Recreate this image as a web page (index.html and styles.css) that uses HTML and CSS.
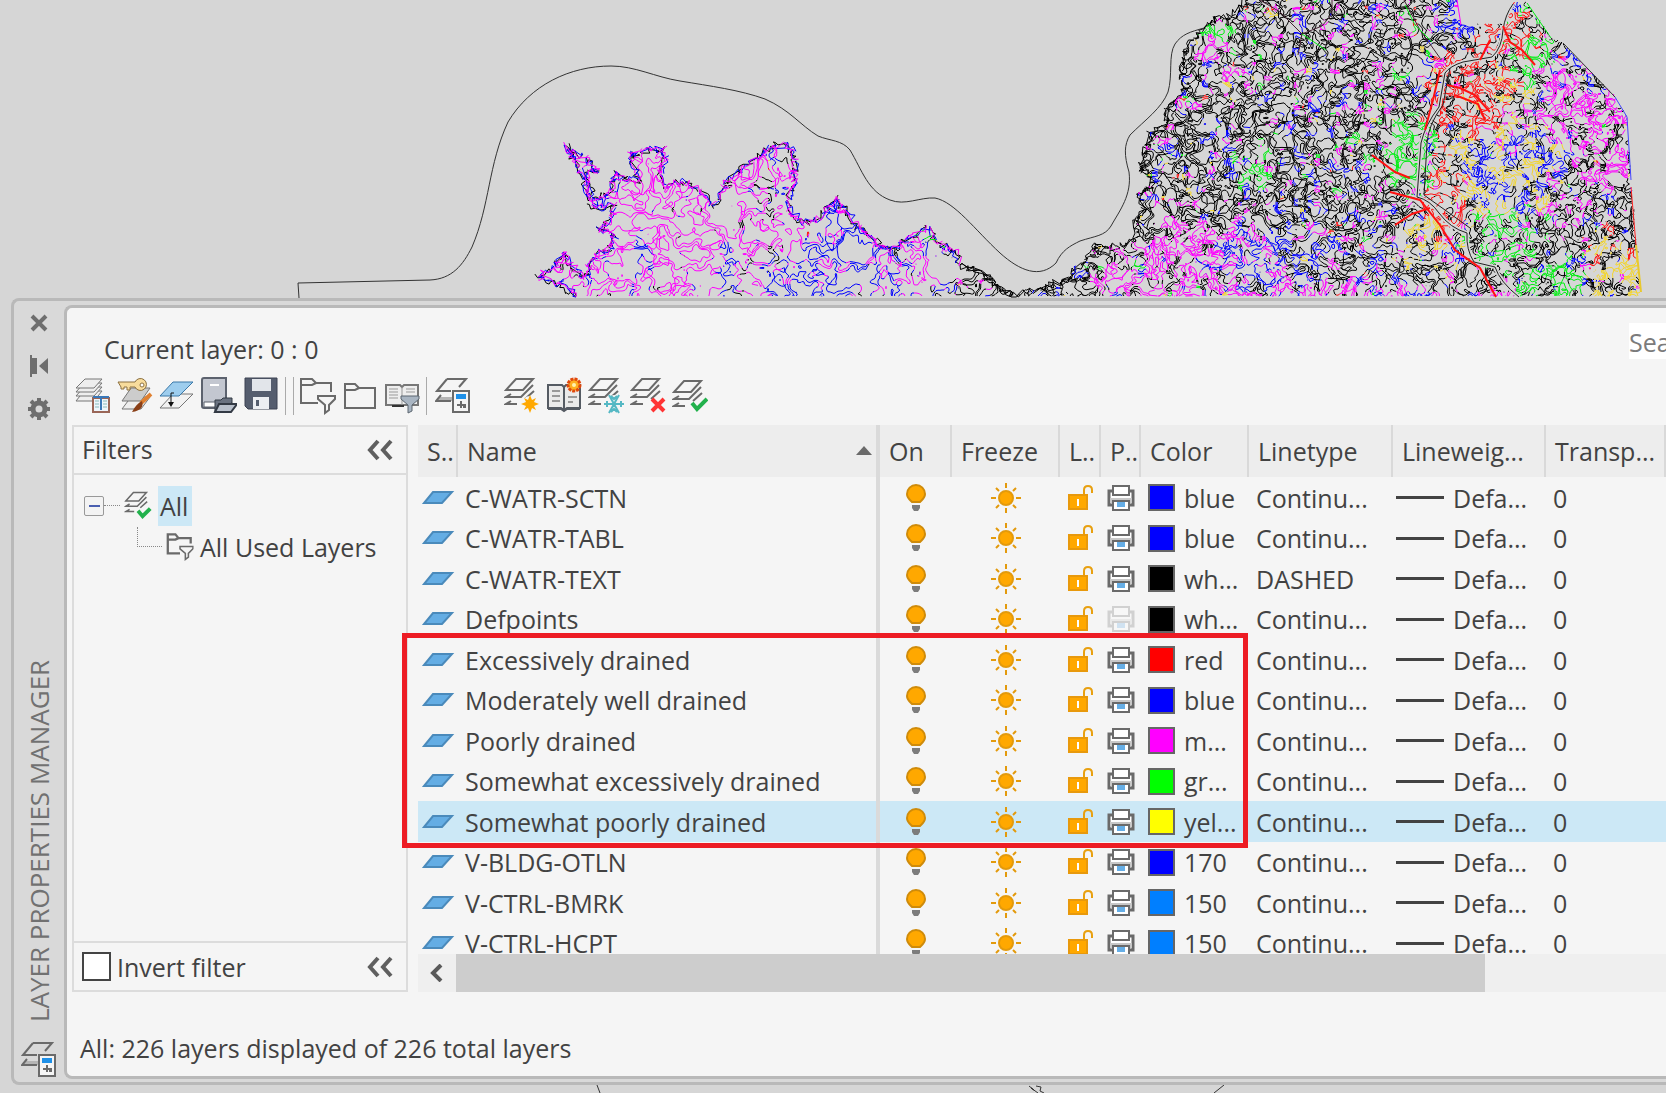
FILE: index.html
```html
<!DOCTYPE html>
<html lang="en">
<head>
<meta charset="utf-8">
<title>Layer Properties Manager</title>
<link rel="stylesheet" href="styles.css">
</head>
<body>
<svg class="sprite" aria-hidden="true">
  <symbol id="layers" viewBox="0 0 36 38">
    <g fill="none" stroke="#6a6a6a" stroke-width="2">
      <path d="M12 2H29L19 13H2Z"/>
      <path d="M7 17L2 20H17L29 8M7 24L2 27H13M21 22L30 14"/>
    </g>
  </symbol>
  <symbol id="layerbox" viewBox="0 0 36 38">
    <path d="M5 20L1 24H17V20Z" fill="#b5b5b5"/>
    <path d="M12 2H31L24 10M12 2L2 14H16M6 18L1 24H16" fill="none" stroke="#6a6a6a" stroke-width="2"/>
    <path d="M18 14H34V35H18Z" fill="#f5f5f5" stroke="#6a6a6a" stroke-width="2"/>
    <path d="M21 17H31V22H21Z" fill="#1e90e8"/>
    <path d="M22 28H31M26 24V31M28 30H31" stroke="#6a6a6a" stroke-width="2"/>
  </symbol>
  <symbol id="funnel" viewBox="0 0 36 38">
    <path d="M18 19H35V22L29 28V33L25 36V28L18 22Z" fill="#f5f5f5" stroke="#6a6a6a" stroke-width="2"/>
  </symbol>
  <symbol id="chevrons" viewBox="0 0 28 22">
    <path d="M12 2L4 11L12 20M25 2L17 11L25 20" fill="none" stroke="#5f5f5f" stroke-width="4"/>
  </symbol>
  <symbol id="plane" viewBox="0 0 34 16">
    <path d="M12 2H31L21 13H3Z" fill="#64ade4" stroke="#4a8abb" stroke-width="2"/>
  </symbol>
  <symbol id="bulb" viewBox="0 0 28 30">
    <path d="M10 19C8 17 5 15 5 11A9 9 0 0 1 23 11C23 15 20 17 18 19Z" fill="#ffa800" stroke="#cf8b0a" stroke-width="2"/>
    <path d="M10 22H18V25L16 28H12L10 25Z" fill="#7c7c7c"/>
  </symbol>
  <symbol id="sun" viewBox="0 0 30 30">
    <circle cx="15" cy="15" r="7" fill="#ffa800" stroke="#e39a0c" stroke-width="2"/>
    <path d="M15 0V5M15 25V30M0 15H5M25 15H30M5 5L8 8M22 22L25 25M5 25L8 22M22 8L25 5" stroke="#e39a0c" stroke-width="2"/>
  </symbol>
  <symbol id="lock" viewBox="0 0 28 28">
    <path d="M17 11V6Q17 2 21 2Q25 2 25 6V9" fill="none" stroke="#e8a010" stroke-width="2"/>
    <path d="M2 11H20V25H2Z" fill="#ffa800" stroke="#e8990c" stroke-width="2"/>
    <path d="M11 15V22" stroke="#fff" stroke-width="2"/>
  </symbol>
  <symbol id="printer" viewBox="0 0 28 28">
    <path d="M2 7H26V21H2Z" fill="#fff" stroke="#6a6a6a" stroke-width="3"/>
    <path d="M3 14H25V19H3Z" fill="#c8c8c8"/>
    <path d="M6 2H22V11H6Z" fill="#fff" stroke="#6a6a6a" stroke-width="2"/>
    <path d="M6 17H22V26H6Z" fill="#fff" stroke="#6a6a6a" stroke-width="2"/>
    <path d="M10 18H18V23H10Z" fill="#66aee6"/>
  </symbol>
</svg>

<main class="workspace">
  <svg class="drawing" id="drawing" viewBox="0 0 1666 1093" preserveAspectRatio="xMinYMin slice" role="img" aria-label="Soil drainage map"></svg>

  <section class="palette">
    <aside class="titlebar">
      <button class="bare" aria-label="Close"><svg width="20" height="20" viewBox="0 0 20 20"><path d="M3 3L17 17M17 3L3 17" stroke="#6e6e6e" stroke-width="4"/></svg></button>
      <button class="bare" aria-label="Auto-hide"><svg width="20" height="24" viewBox="0 0 20 24"><path d="M1 1H3V23H1ZM3 4H8V20H3ZM19 4V20L10 12Z" fill="#6e6e6e"/></svg></button>
      <button class="bare" aria-label="Properties"><svg width="24" height="24" viewBox="0 0 24 24"><g stroke="#6e6e6e" fill="none"><circle cx="12" cy="12" r="6" stroke-width="5"/><path d="M12 1V5M12 19V23M1 12H5M19 12H23M4 4L7 7M17 17L20 20M4 20L7 17M17 7L20 4" stroke-width="4"/></g></svg></button>
      <h1 class="title">LAYER PROPERTIES MANAGER</h1>
      <svg width="36" height="38"><use href="#layerbox"/></svg>
    </aside>

    <div class="panel">
      <header class="head">
        <p class="current">Current layer: 0 : 0</p>
        <input class="search" type="text" placeholder="Search for layer" aria-label="Search for layer">
      </header>

      <div class="toolbar">
        <button class="tool" aria-label="Layer states"><svg viewBox="0 0 36 38"><g fill="#eee" stroke="#777" stroke-width="1"><path d="M9 14H27L19 24H1Z"/><path d="M9 10H27L19 19H1Z"/><path d="M9 6H27L19 15H1Z"/><path d="M10 2H27L19 11H1Z"/></g><path d="M18 21H34V35H18Z" fill="#eef5fb" stroke="#9a6657" stroke-width="2"/><path d="M18 20H34M26 21V33" stroke="#3a78b8" stroke-width="2"/><path d="M20 24H24M20 27H24M20 30H24M28 24H32M28 27H32M28 30H32" stroke="#8bb"/></svg></button>
        <button class="tool" aria-label="Layer match"><svg viewBox="0 0 36 38"><g stroke="#777"><path d="M14 20H33L24 32H5Z" fill="#eee"/><path d="M14 11H33L24 24H5Z" fill="#ccc"/></g><path d="M1 5H18A6 6 0 1 1 18 10H13V13H10V10H7V12H4V10Z" fill="#f8dc9c" stroke="#8c7040"/><circle cx="25" cy="8" r="2" fill="#fff" stroke="#8c7040"/><path d="M34 17L24 26" stroke="#e08030" stroke-width="4"/><path d="M25 24Q28 33 15 35Q19 27 25 24Z" fill="#8a4018"/></svg></button>
        <button class="tool" aria-label="Change to current layer"><svg viewBox="0 0 36 38"><path d="M14 17H34L20 31H1Z" fill="#f2f2f2" stroke="#777"/><path d="M14 5H34L20 19H1Z" fill="#9dcdee" stroke="#3a78a8"/><path d="M15 16H12V27" fill="none" stroke="#111" stroke-width="1"/><path d="M9 25H15L12 30Z" fill="#111"/></svg></button>
        <button class="tool" aria-label="Open layer state"><svg viewBox="0 0 36 38"><path d="M1 3Q1 1 3 1H25V31H3Q1 31 1 29Z" fill="#c3c7d0" stroke="#5c626e" stroke-width="2"/><path d="M3 25H15V30H3Z" fill="#fff" stroke="#5c626e"/><path d="M9 8H18" stroke="#fff" stroke-width="2"/><path d="M14 23H20L22 21H31V26H30V35H14Z" fill="#6a7280" stroke="#333a44"/><path d="M18 27H36L30 35H14Z" fill="#b9c0cb" stroke="#333a44" stroke-width="2"/></svg></button>
        <button class="tool" aria-label="Save layer state"><svg viewBox="0 0 36 38"><path d="M2 1H34V32H5L2 29Z" fill="#555d6e" stroke="#3d4352"/><path d="M9 2H28V14H9Z" fill="#e2e5ea"/><path d="M10 20H26V32H10Z" fill="#eceef2"/><path d="M13 23H16V29H13Z" fill="#555d6e"/></svg></button>
        <span class="divider double"></span>
        <button class="tool" aria-label="New property filter"><svg viewBox="0 0 36 38"><path d="M18 26H1V2H12L16 6H31V15M1 8H12L16 6" fill="none" stroke="#6a6a6a" stroke-width="2"/><use href="#funnel"/></svg></button>
        <button class="tool" aria-label="New group filter"><svg viewBox="0 0 36 38"><path d="M3 31V7H13L17 11H33V31ZM3 13H13L17 11" fill="none" stroke="#6a6a6a" stroke-width="2"/></svg></button>
        <button class="tool" aria-label="Layer filter book"><svg viewBox="0 0 36 38"><path d="M2 8H16L18 10L20 8H34V28H2Z" fill="#eee" stroke="#777" stroke-width="2"/><path d="M18 10V28M5 12H14M5 15H14M5 18H14M5 21H14M22 12H31M22 15H31" stroke="#999"/><path d="M8 29H20" stroke="#333" stroke-width="2"/><path d="M17 19H35V22L28 28V34L24 36V28L17 22Z" fill="#a9b5c2" stroke="#5c6670"/></svg></button>
        <span class="divider"></span>
        <button class="tool" aria-label="Isolate layers"><svg><use href="#layerbox"/></svg></button>
        <button class="tool spaced" aria-label="New layer"><svg viewBox="0 0 36 38"><use href="#layers"/><circle cx="26" cy="27" r="8" fill="#f5f5f5"/><path d="M26 18L28 23L32 21L30 25L35 27L30 29L32 33L28 31L26 36L24 31L20 33L22 29L17 27L22 25L20 21L24 23Z" fill="#ffa800"/></svg></button>
        <button class="tool" aria-label="New layer from standard"><svg viewBox="0 0 36 38"><path d="M2 8H16L18 10L20 8H34V31H21L18 33L15 31H2Z" fill="#eaeaea" stroke="#555b63" stroke-width="2"/><path d="M2 32H15L18 34L21 32H34M18 10V32" fill="none" stroke="#555b63" stroke-width="2"/><path d="M6 14H14M6 19H14M6 24H14M22 20H31M22 25H27" stroke="#999" stroke-width="2"/><circle cx="28" cy="8" r="6" fill="#ffb020" stroke="#e0480c" stroke-width="3" stroke-dasharray="3 1"/><circle cx="28" cy="8" r="2" fill="#fff3b0"/></svg></button>
        <button class="tool" aria-label="New layer frozen"><svg viewBox="0 0 36 38"><use href="#layers"/><circle cx="26" cy="27" r="9" fill="#f5f5f5"/><path d="M16 27H36M21 18L31 36M31 18L21 36M19 24V30M33 24V30M23 19L26 22L29 19M23 35L26 32L29 35" fill="none" stroke="#55b8c4" stroke-width="2"/></svg></button>
        <button class="tool" aria-label="Delete layer"><svg viewBox="0 0 36 38"><use href="#layers"/><circle cx="28" cy="28" r="8" fill="#f5f5f5"/><path d="M22 22L34 34M34 22L22 34" stroke="#f33" stroke-width="4"/></svg></button>
        <button class="tool" aria-label="Set current"><svg viewBox="0 0 36 38"><use href="#layers" y="2"/><path d="M18 24L26 32L36 22V34H20Z" fill="#f5f5f5"/><path d="M20 26L25 32L35 22" fill="none" stroke="#22b14c" stroke-width="4"/></svg></button>
      </div>

      <div class="main">
        <section class="filters">
          <header class="bar bar-top">
            <h2 class="label">Filters</h2>
            <button class="bare" aria-label="Collapse filters"><svg width="28" height="22"><use href="#chevrons"/></svg></button>
          </header>
          <ul class="tree">
            <li class="node">
              <button class="expander" aria-label="Collapse All"></button>
              <span class="dots"></span>
              <svg class="node-icon" viewBox="0 0 36 38"><use href="#layers"/><path d="M16 24L25 34L36 22V36H16Z" fill="#f5f5f5"/><path d="M18 26L24 33L34 23" fill="none" stroke="#22b14c" stroke-width="5"/></svg>
              <span class="chosen">All</span>
            </li>
            <li class="node child">
              <span class="elbow"></span>
              <svg class="node-icon" viewBox="0 0 36 38"><path d="M18 28H2V3H12L16 8H32V15M2 10H12L16 8" fill="none" stroke="#6a6a6a" stroke-width="3"/><use href="#funnel"/></svg>
              <span>All Used Layers</span>
            </li>
          </ul>
          <footer class="bar bar-bottom">
            <label class="invert"><input class="check" type="checkbox">Invert filter</label>
            <button class="bare" aria-label="Collapse filter tree"><svg width="28" height="22"><use href="#chevrons"/></svg></button>
          </footer>
        </section>

        <section class="list">
          <div class="viewport">
            <table class="grid">
              <colgroup><col class="c-status"><col class="c-name"><col class="c-on"><col class="c-freeze"><col class="c-lock"><col class="c-plot"><col class="c-color"><col class="c-type"><col class="c-weight"><col class="c-trans"></colgroup>
              <thead><tr><th>S..</th><th class="name"><span class="sorted">Name<svg width="16" height="10" viewBox="0 0 16 10"><path d="M0 9L8 0L16 9Z" fill="#6a6a6a"/></svg></span></th><th>On</th><th>Freeze</th><th>L..</th><th>P..</th><th>Color</th><th>Linetype</th><th>Lineweig...</th><th>Transp...</th></tr></thead>
              <tbody id="rows"></tbody>
            </table>
            <div class="callout"></div>
          </div>
          <div class="scrollbar">
            <button class="bare arrow" aria-label="Scroll left"><svg width="14" height="18" viewBox="0 0 14 18"><path d="M12 1L4 9L12 17" fill="none" stroke="#5a5a5a" stroke-width="4"/></svg></button>
            <div class="thumb"></div>
          </div>
        </section>
      </div>
      <footer class="status">All: 226 layers displayed of 226 total layers</footer>
    </div>
  </section>
</main>
<script src="app.js"></script>
</body>
</html>
```
FILE: styles.css
```css
* { box-sizing: border-box; }
body {
  margin: 0;
  overflow: hidden;
  background: #d6d6d6;
  color: #424242;
  font: 25px/36px "Open Sans", "Noto Sans", sans-serif;
}
h1, h2, p, ul { margin: 0; padding: 0; font: inherit; list-style: none; }
svg { display: block; }
button, input { font: inherit; color: inherit; }
.sprite { width: 0; height: 0; position: absolute; }
.bare, .tool { padding: 0; border: 0; background: none; display: grid; place-items: center; }

.workspace { display: grid; grid-template: minmax(0, 1fr) / minmax(0, 1fr); height: 100vh; min-height: 700px; }
.drawing { grid-area: 1 / 1; width: 100%; height: 100%; }
.palette {
  grid-area: 1 / 1;
  z-index: 1;
  display: flex;
  margin: 298px 0 8px 11px;
  padding: 4px 0 3px;
  border: 3px solid #b9b9b9;
  border-right: 0;
  border-radius: 8px 0 0 8px;
  background: #d9d9d9;
}
.titlebar { display: flex; flex-direction: column; align-items: center; gap: 19px; width: 50px; padding: 6px 0 0; }
.titlebar .bare { height: 24px; }
.title {
  flex: 1;
  writing-mode: vertical-rl;
  transform: rotate(180deg);
  color: #717171;
  font-size: 26px;
  line-height: 32px;
}
.panel {
  flex: 1;
  min-width: 0;
  display: flex;
  flex-direction: column;
  border: 3px solid #b9b9b9;
  border-right: 0;
  border-radius: 8px 0 0 8px;
  background: #f5f5f5;
}
.head { display: flex; justify-content: space-between; height: 69px; padding: 15px 0 0 37px; overflow: hidden; }
.current { padding-top: 8px; }
.search { width: 37px; height: 36px; padding: 2px 0 0; border: 0; background: #fff; }
.search::placeholder { color: #7b7b7b; opacity: 1; }

.toolbar { display: flex; gap: 6px; height: 38px; padding-left: 8px; }
.tool, .tool svg { width: 36px; height: 38px; }
.spaced { margin-left: 27px; }
.divider { width: 3px; border-left: 1px solid #aaa; }
.double { width: 9px; border-right: 1px solid #aaa; }

.main { flex: 1; min-height: 0; display: flex; gap: 10px; padding: 10px 0 0 5px; }
.filters { display: flex; flex-direction: column; width: 336px; border: 2px solid #dcdcdc; }
.bar { display: flex; align-items: center; justify-content: space-between; height: 49px; padding: 0 12px 0 8px; }
.bar-top { height: 48px; border-bottom: 2px solid #dcdcdc; }
.label { margin-top: -3px; }
.bar-bottom { border-top: 2px solid #dcdcdc; }
.tree { flex: 1; padding: 10px 0 0 10px; }
.node { display: flex; align-items: center; height: 41px; }
.expander { width: 20px; height: 20px; padding: 4px; border: 1px solid #999; border-radius: 2px; background: linear-gradient(#4a5fb0, #4a5fb0) center / 11px 2px no-repeat, #f3f3f3; }
.dots { width: 16px; border-top: 1px dotted #888; }
.node-icon { width: 28px; height: 29px; margin: 0 6px 0 4px; }
.chosen { height: 40px; padding: 0 4px 0 2px; line-height: 40px; background: #cce8f6; }
.child { padding-left: 53px; }
.elbow { width: 25px; height: 20px; margin-bottom: 20px; border: 1px dotted #888; border-width: 0 0 1px 1px; }
.invert { display: flex; align-items: center; gap: 6px; }
.check { appearance: none; width: 29px; height: 29px; margin: 0; border: 2px solid #444; background: #fff; }

.list { flex: 1; min-width: 0; display: flex; flex-direction: column; }
.viewport { position: relative; flex: 1; min-height: 0; overflow: hidden; }
.grid { width: 1248px; table-layout: fixed; border-collapse: separate; border-spacing: 0; }
.c-status { width: 40px; } .c-name { width: 422px; } .c-on { width: 72px; } .c-freeze { width: 108px; }
.c-lock { width: 41px; } .c-plot { width: 40px; } .c-color { width: 108px; } .c-type { width: 144px; }
.c-weight { width: 153px; } .c-trans { width: 120px; }
th, td { padding: 0; white-space: nowrap; overflow: hidden; text-align: left; font-weight: 400; }
th { height: 52px; padding-left: 9px; background: #ededed; border-right: 2px solid #d9d9d9; }
td { height: 40px; padding-left: 7px; }
tr:nth-child(odd) td { height: 41px; }
.name { border-right: 4px solid #dadada; }
td.name { padding-left: 7px; }
.sorted { display: flex; align-items: center; justify-content: space-between; padding-right: 4px; }
td .bare { width: 100%; }
.cell { padding: 0; }
.off { opacity: 0.25; }
.pair { display: flex; align-items: center; gap: 9px; }
.swatch { width: 27px; height: 27px; border: 2px solid #666; }
.stroke { width: 48px; height: 3px; margin-left: -4px; background: #424242; }
.current-row td { background: #cce8f6; }
.list .viewport { margin-left: -16px; padding-left: 16px; }
.callout { position: absolute; left: 0; top: 208px; width: 846px; height: 215px; border: 5px solid #ed1c24; }
.scrollbar { display: flex; height: 38px; background: #efefef; }
.arrow { width: 38px; padding-right: 3px; }
.thumb { width: 1029px; background: #cdcdcd; }
.status { height: 84px; padding: 38px 0 0 13px; }
```
FILE: app.js
```js
const layers = [
  ['C-WATR-SCTN', '#00f', 'blue', 'Continu...'],
  ['C-WATR-TABL', '#00f', 'blue', 'Continu...'],
  ['C-WATR-TEXT', '#000', 'wh...', 'DASHED'],
  ['Defpoints', '#000', 'wh...', 'Continu...', 'off'],
  ['Excessively drained', '#f00', 'red', 'Continu...'],
  ['Moderately well drained', '#00f', 'blue', 'Continu...'],
  ['Poorly drained', '#f0f', 'm...', 'Continu...'],
  ['Somewhat excessively drained', '#0f0', 'gr...', 'Continu...'],
  ['Somewhat poorly drained', '#ff0', 'yel...', 'Continu...', '', 'current-row'],
  ['V-BLDG-OTLN', '#00f', '170', 'Continu...'],
  ['V-CTRL-BMRK', '#007fff', '150', 'Continu...'],
  ['V-CTRL-HCPT', '#007fff', '150', 'Continu...']
];
const toggle = (id, w, h, label, cls = '') =>
  `<td class="cell"><button class="bare ${cls}" aria-label="${label}"><svg width="${w}" height="${h}"><use href="#${id}"/></svg></button></td>`;
document.getElementById('rows').innerHTML = layers.map(([name, hex, color, type, plot, row]) =>
  `<tr class="${row || ''}"><td class="cell"><button class="bare" aria-label="Status"><svg width="34" height="16"><use href="#plane"/></svg></button></td>
  <td class="name">${name}</td>${toggle('bulb', 28, 30, 'On')}${toggle('sun', 30, 30, 'Freeze')}${toggle('lock', 28, 28, 'Lock')}${toggle('printer', 28, 28, 'Plot', plot)}
  <td><span class="pair"><span class="swatch" style="background:${hex}"></span>${color}</span></td><td>${type}</td>
  <td><span class="pair"><span class="stroke"></span>Defa...</span></td><td>0</td></tr>`).join('');

// Soil map: contour lines of layered noise, coloured by drainage class.
const hash = (x, y, s) => {
  let h = Math.imul(x, 374761393) + Math.imul(y, 668265263) + Math.imul(s, 1442695041);
  h = Math.imul(h ^ (h >>> 13), 1274126177);
  return ((h ^ (h >>> 16)) >>> 0) / 4294967296;
};
const noise = (x, y, s) => {
  const i = Math.floor(x), j = Math.floor(y);
  const u = x - i, v = y - j, a = u * u * (3 - 2 * u), b = v * v * (3 - 2 * v);
  const t = hash(i, j, s) * (1 - a) + hash(i + 1, j, s) * a;
  const w = hash(i, j + 1, s) * (1 - a) + hash(i + 1, j + 1, s) * a;
  return t * (1 - b) + w * b;
};
const inside = (poly, x, y) => {
  let hit = false;
  for (let i = 0, j = poly.length - 1; i < poly.length; j = i++) {
    const [ax, ay] = poly[i], [bx, by] = poly[j];
    if ((ay > y) !== (by > y) && x < (bx - ax) * (y - ay) / (by - ay) + ax) hit = !hit;
  }
  return hit;
};
const east = [[1248,0],[1232,17],[1212,20],[1200,33],[1194,40],[1182,57],[1182,80],[1188,88],[1166,110],[1166,127],[1150,133],[1140,170],[1156,182],[1138,193],[1144,210],[1136,220],[1136,240],[1120,248],[1096,245],[1086,262],[1072,268],[1072,278],[1040,288],[1012,297],[1640,297],[1641,292],[1631,187],[1627,117],[1615,97],[1563,43],[1551,38],[1527,3],[1513,3],[1503,24],[1461,25],[1457,0]];
const west = [[566,146],[572,152],[586,157],[598,173],[588,172],[592,198],[604,196],[611,190],[616,171],[622,180],[640,180],[632,162],[631,153],[640,152],[664,148],[666,158],[660,175],[666,187],[680,181],[700,190],[712,205],[720,200],[724,184],[750,164],[770,148],[784,143],[792,150],[795,162],[794,185],[787,200],[788,208],[800,222],[815,221],[825,212],[836,198],[845,210],[860,228],[880,245],[890,252],[905,240],[930,227],[933,235],[940,245],[955,250],[960,265],[985,275],[1012,297],[576,297],[560,284],[538,277],[556,267],[563,252],[570,265],[584,277],[595,255],[610,248],[615,235],[598,230],[612,218],[614,205],[595,208],[590,200],[578,168]];
// Zones: centre x, centre y, radius x, radius y, palette index, strength.
const inks = ['#000', '#00f', '#f0f', '#0e1', '#f11', '#f3d52e'];
const eastZones = [[1190,285,110,75,2,1],[1255,270,70,60,1,.9],[1300,290,170,18,2,.9],[1300,285,170,22,1,.7],[1410,255,50,40,1,.6],[1225,55,40,30,2,.7],[1195,155,60,70,1,.5],[1480,80,60,40,4,1],[1525,50,30,50,3,.85],[1505,35,40,40,4,.9],[1470,110,40,30,4,.9],[1500,90,50,30,5,.8],[1580,95,60,60,2,1],[1590,60,50,40,1,.8],[1500,160,70,60,5,.8],[1510,165,65,50,1,.9],[1520,120,60,40,2,.7],[1600,150,40,60,2,.9],[1410,155,30,45,3,1.1],[1445,190,25,60,4,.9],[1455,170,30,50,5,.7],[1255,165,26,24,3,.9],[1510,235,60,40,3,.8],[1550,285,40,25,3,.9],[1615,270,35,45,5,.9],[1610,250,40,30,4,.6],[1430,250,40,40,5,.7],[1340,20,60,50,2,.45],[1460,20,20,30,1,1],[1215,30,20,12,3,.9],[1120,265,30,20,3,.6],[1560,200,60,50,2,.6],[1560,230,60,60,1,.5]];
const westZones = [[660,240,150,110,2,1],[780,240,120,110,2,.8],[820,280,70,35,1,1],[840,230,30,45,1,1],[870,265,50,40,1,.7],[910,270,40,40,2,.8],[935,232,20,8,3,2],[1000,285,50,25,0,1],[600,180,25,50,1,1],[640,260,12,50,1,1],[728,270,12,40,1,1.1],[762,195,16,22,0,.9]];
const pickInk = (zones, base, x, y) => {
  let best = 0, top = -1;
  for (let c = 0; c < 6; c++) {
    let w = base[c];
    for (const z of zones) if (z[4] === c) {
      const d = ((x - z[0]) / z[2]) ** 2 + ((y - z[1]) / z[3]) ** 2;
      if (d < 1) w = Math.max(w, z[5] * (1 - d * d * .6));
    }
    w += noise(x / 7, y / 7, 20 + c) * 1.1;
    if (w > top) { top = w; best = c; }
  }
  return best;
};
const paths = inks.map(() => []);
const contour = (poly, zones, base, [x0, x1, y0, y1], scale, levels, seed) => {
  const field = (x, y) => {
    const wx = x + (noise(x / 6, y / 6, seed + 3) - .5) * 9, wy = y + (noise(x / 6, y / 6, seed + 4) - .5) * 9;
    return noise(wx / scale, wy / scale, seed) * .7 + noise(wx / scale * 2.3, wy / scale * 2.3, seed + 1) * .3;
  };
  const cell = 2;
  for (let y = y0; y < y1; y += cell) for (let x = x0; x < x1; x += cell) {
    if (!inside(poly, x + 1, y + 1)) continue;
    const p = [[x, y], [x + cell, y], [x + cell, y + cell], [x, y + cell]];
    const f = p.map(q => field(q[0], q[1]));
    for (const level of levels) {
      const cut = [];
      for (let e = 0; e < 4; e++) {
        const a = f[e], b = f[(e + 1) % 4];
        if ((a < level) !== (b < level)) {
          const t = (level - a) / (b - a), m = p[e], n = p[(e + 1) % 4];
          cut.push((m[0] + (n[0] - m[0]) * t).toFixed(1) + ' ' + (m[1] + (n[1] - m[1]) * t).toFixed(1));
        }
      }
      if (cut.length > 1) paths[pickInk(zones, base, x, y)].push('M' + cut[0] + 'L' + cut[1]);
    }
  }
};
const outline = (poly, passes, open, choose) => {
  poly.forEach(([ax, ay], i) => {
    if (open && i === poly.length - 1) return;
    const [bx, by] = poly[(i + 1) % poly.length];
    if (ay > 295 && by > 295) return;
    const n = Math.max(1, Math.round(Math.hypot(bx - ax, by - ay) / 3));
    for (let pass = 0; pass < passes; pass++) {
      let px = ax, py = ay;
      for (let k = 1; k <= n; k++) {
        const x = bx * k / n + ax * (1 - k / n) + (hash(i, k, 50 + pass) - .5) * 8;
        const y = Math.min(297, by * k / n + ay * (1 - k / n) + (hash(i, k, 60 + pass) - .5) * 8);
        paths[choose(x, y, pass)].push(`M${px.toFixed(1)} ${py.toFixed(1)}L${x.toFixed(1)} ${y.toFixed(1)}`);
        px = x; py = y;
      }
    }
  });
};
const eastBase = [.75, .4, .4, .2, .08, .2];
contour(east, eastZones, eastBase, [1010, 1644, 0, 297], 13, [.4, .52, .64], 1);
contour(east, eastZones, eastBase, [1010, 1644, 0, 297], 10, [.36, .6], 11);
contour(west, westZones, [.35, .4, .3, 0, 0, 0], [536, 1014, 140, 297], 17, [.36, .5, .64], 31);
contour(west, westZones, [.3, .2, .5, 0, 0, 0], [536, 1014, 140, 297], 13, [.3], 41);
outline(west, 3, false, (x, y, pass) => x > 960 ? 0 : pass);
outline(east.slice(0, 24), 2, true, () => 0);
const svg = (d, color, width = 1) => `<path d="${d}" fill="none" stroke="${color}" stroke-width="${width}"/>`;
const river = 'M1513 4Q1505 15 1503 30Q1502 48 1492 57L1463 62Q1450 66 1445 73L1439 107Q1425 125 1421 143L1417 197Q1430 200 1439 213Q1450 228 1467 233Q1466 250 1474 262L1495 267Q1500 282 1519 297';
document.getElementById('drawing').innerHTML =
  paths.map((d, i) => svg(d.join(''), inks[i])).join('') +
  svg(river, '#d6d6d6', 4) + svg(river, '#222') +
  svg('M1450 68L1443 105Q1428 125 1427 143L1424 195L1445 210L1470 228', '#222') +
  svg('M1440 70L1433 100L1425 130M1390 192L1420 200L1440 225L1455 250L1480 268L1496 297M1372 155L1395 172L1410 178M1395 225L1412 214L1430 208', '#f11', 2) +
  svg('M1503 26L1510 42L1522 50L1535 65M1490 40L1480 60M1447 85L1460 88L1475 95L1490 112M1455 95L1478 104L1485 120', '#f11', 2) +
  svg('M1260 0L1280 12L1302 34L1322 26L1332 14L1332 0M1302 34L1298 55M1404 0L1420 30L1440 58', '#423') +
  svg('M1302 34L1326 50M1405 5L1415 25L1432 42M1551 38L1527 3', '#0e1') +
  svg('M1563 43L1615 97', '#333') + svg('M1457 0L1461 25', '#f0f') +
  svg('M1615 97L1627 117L1631 180', '#44f') + svg('M1631 187L1636 245', '#f22') + svg('M1636 245L1641 292', '#e8c82e', 2) +
  svg('M299 298L298 283L430 280C452 279 463 265 472 247C490 205 488 165 508 122C530 85 570 66 611 66C635 66 655 77 680 81C710 86 740 90 765 99C790 110 800 125 818 136C830 141 842 140 850 150C862 170 868 192 890 200C905 206 920 197 935 198C955 202 975 230 1000 253C1020 271 1040 279 1056 263C1062 250 1070 246 1080 241C1095 236 1105 236 1111 226C1120 210 1132 195 1129 172C1124 155 1124 145 1130 135C1145 120 1162 108 1168 92C1173 75 1168 55 1175 44C1182 34 1190 32 1204 28', '#333') +
  svg('M597 1085L600 1093M1224 1085L1214 1093M1029 1086L1034 1090L1031 1088L1038 1093M1036 1086L1041 1087L1040 1091L1044 1093', '#333');
```
